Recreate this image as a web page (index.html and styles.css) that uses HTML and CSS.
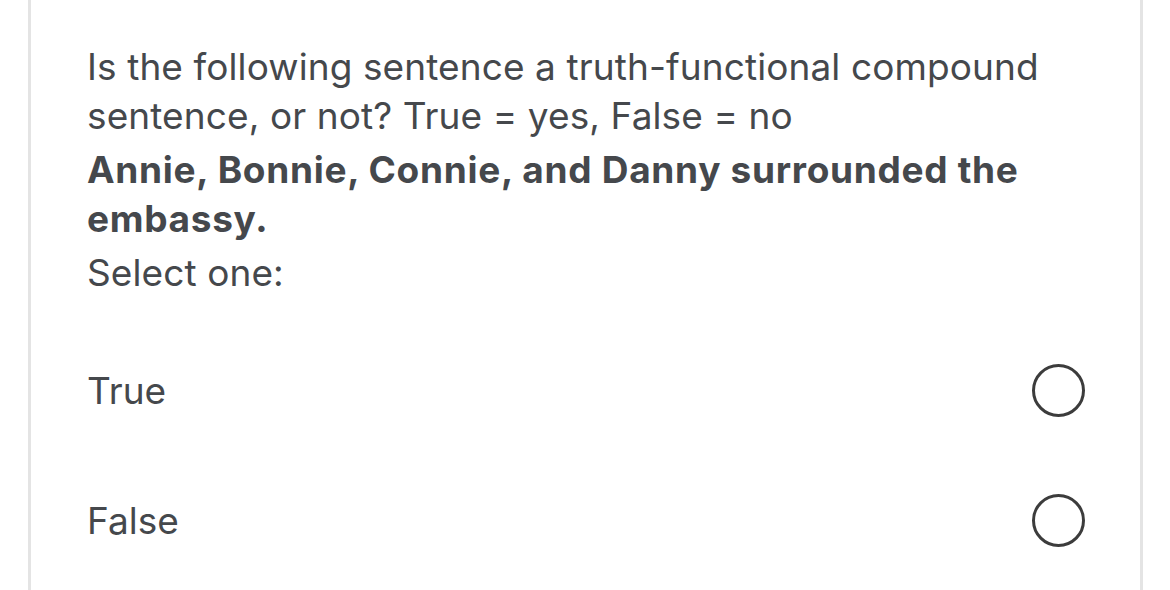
FILE: index.html
```html
<!DOCTYPE html>
<html>
<head>
<meta charset="utf-8">
<link rel="stylesheet" href="styles.css">
</head>
<body>
<div class="card">
  <div class="question">
    <p class="prompt">Is the following sentence a truth-functional compound sentence, or not? True = yes, False = no</p>
    <p class="statement">Annie, Bonnie, Connie, and Danny surrounded the embassy.</p>
    <p class="select">Select one:</p>
  </div>
  <div class="options">
    <div class="option">
      <span class="label">True</span>
      <span class="radio"></span>
    </div>
    <div class="option">
      <span class="label">False</span>
      <span class="radio"></span>
    </div>
  </div>
</div>
</body>
</html>
```
FILE: styles.css
```css
html, body {
  margin: 0;
  padding: 0;
  background: #ffffff;
}
body {
  font-family: Inter, "Liberation Sans", sans-serif;
  color: #45484c;
}
.card {
  margin-left: 28px;
  width: 1115px;
  height: 590px;
  overflow: hidden;
  border-left: 3px solid #e4e4e4;
  border-right: 3px solid #e4e4e4;
  padding: 42px 0 0 56px;
  box-sizing: border-box;
}
.question p {
  margin: 0 0 5px 0;
  font-size: 37px;
  line-height: 49px;
  letter-spacing: 0.1px;
}
.prompt {
  width: 980px;
}
.statement {
  font-weight: 700;
  width: 990px;
  letter-spacing: 0.7px !important;
}
.options {
  margin-top: 28px;
  padding-right: 55px;
}
.option {
  display: flex;
  justify-content: space-between;
  align-items: center;
  height: 130px;
}
.label {
  font-size: 37px;
}
.radio {
  width: 53px;
  height: 53px;
  border: 3px solid #3c3c3c;
  border-radius: 50%;
  box-sizing: border-box;
}
```
